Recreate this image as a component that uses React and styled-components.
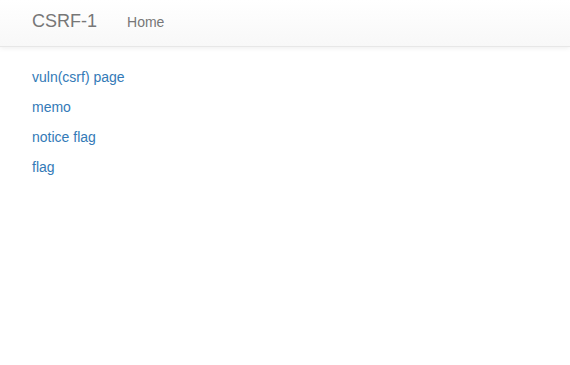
import React from "react";
import styled, { createGlobalStyle } from "styled-components";

const GlobalStyle = createGlobalStyle`
  html, body {
    margin: 0;
    padding: 0;
    background: #fff;
    font-family: "Liberation Sans", Arial, sans-serif;
    font-size: 14px;
    line-height: 1.42857;
    color: #333;
  }
`;

const Navbar = styled.nav`
  height: 46px;
  display: flex;
  align-items: center;
  padding: 0 32px;
  background: linear-gradient(to bottom, #ffffff 0%, #f8f8f8 100%);
  border-bottom: 1px solid #e7e7e7;
  box-shadow: inset 0 1px 0 rgba(255, 255, 255, 0.15), 0 1px 5px rgba(0, 0, 0, 0.075);
`;

const Brand = styled.a`
  font-size: 18px;
  color: #777;
  text-decoration: none;
  margin-right: 30px;
  margin-top: -2px;
`;

const NavLink = styled.a`
  font-size: 14px;
  color: #777;
  text-decoration: none;
`;

const Content = styled.div`
  padding: 20px 32px 0;
  display: flex;
  flex-direction: column;
  gap: 10px;
`;

const Link = styled.a`
  color: #337ab7;
  text-decoration: none;
  line-height: 20px;
  align-self: flex-start;
`;

export default function App() {
  return (
    <>
      <GlobalStyle />
      <Navbar>
        <Brand href="#">CSRF-1</Brand>
        <NavLink href="#">Home</NavLink>
      </Navbar>
      <Content>
        <Link href="#">vuln(csrf) page</Link>
        <Link href="#">memo</Link>
        <Link href="#">notice flag</Link>
        <Link href="#">flag</Link>
      </Content>
    </>
  );
}
